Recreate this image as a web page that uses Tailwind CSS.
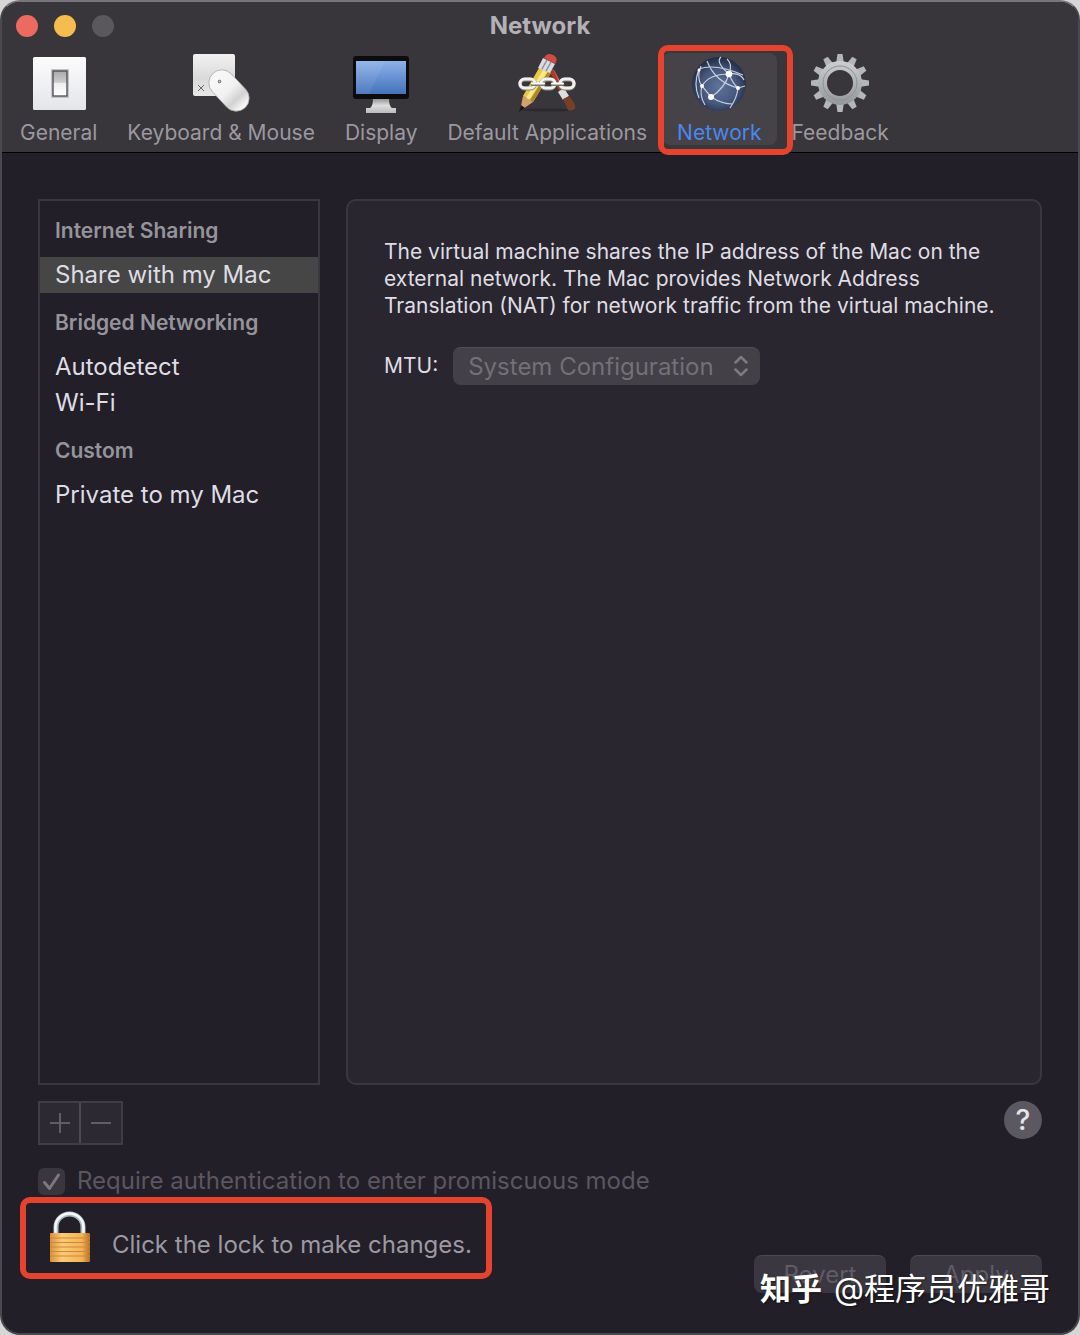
<!DOCTYPE html>
<html lang="en">
<head>
  <meta charset="UTF-8" />
  <meta name="viewport" content="width=device-width, initial-scale=1.0"/>
  <title>Network</title>
  <script src="https://cdn.jsdelivr.net/npm/@tailwindcss/browser@4"></script>
</head>
<body class="bg-[#d6d6d6] font-['Inter','Noto_Sans_CJK_SC',sans-serif] text-[#dfdde3]">

  <div class="relative flex min-h-screen flex-col overflow-hidden rounded-[20px] border-2 border-t-[#77757b] border-[#4a484f] bg-[#221f29]">

    <!-- Title bar and toolbar -->
    <header class="border-b border-black bg-[#38353b]">
      <div class="grid grid-cols-[1fr_auto_1fr] items-center px-3 pt-2">
        <div class="flex gap-4 pl-0.5">
          <button aria-label="Close" class="size-[22px] rounded-full bg-[#ec6a5f]"></button>
          <button aria-label="Minimize" class="size-[22px] rounded-full bg-[#f5bd4f]"></button>
          <button aria-label="Zoom" disabled class="size-[22px] rounded-full bg-[#5a575d]"></button>
        </div>
        <h1 class="text-2xl font-bold text-[#b3b1b6]">Network</h1>
      </div>

      <nav class="flex pt-[11px] pb-[7px] pl-[3px] text-[21px] leading-6 text-[#9b999f]">
        <button class="flex flex-col items-center gap-2 px-[15px]">
          <svg class="h-[60px] w-16" viewBox="0 3 64 60">
            <defs>
              <linearGradient id="plate" x1="0" y1="0" x2="0" y2="1"><stop offset="0" stop-color="#fcfcfd"/><stop offset="1" stop-color="#e4e5e9"/></linearGradient>
              <linearGradient id="rocker" x1="0" y1="0" x2="0" y2="1"><stop offset="0" stop-color="#aaa"/><stop offset=".45" stop-color="#ccc"/><stop offset=".5" stop-color="#eee"/><stop offset="1" stop-color="#fff"/></linearGradient>
            </defs>
            <rect x="6" y="7" width="53" height="53" rx="1.5" fill="url(#plate)"/>
            <rect x="24" y="19" width="18" height="29" fill="#c4c5c9"/>
            <rect x="26" y="21" width="14" height="25" fill="url(#rocker)" stroke="#4c4c50" stroke-width="1.3"/>
          </svg>
          <span>General</span>
        </button>
        <button class="flex flex-col items-center gap-2 px-[15px]">
          <svg class="h-[60px] w-16" viewBox="0 3 64 60">
            <defs>
              <linearGradient id="key" x1="0" y1="0" x2="0" y2="1"><stop offset="0" stop-color="#f2f2f2"/><stop offset=".6" stop-color="#dadada"/><stop offset="1" stop-color="#e8e8e8"/></linearGradient>
              <linearGradient id="mouse" x1="0" y1="0" x2="0" y2="1"><stop offset="0" stop-color="#fafafa"/><stop offset=".5" stop-color="#f1f1f1"/><stop offset=".75" stop-color="#d2d2d2"/><stop offset="1" stop-color="#fff"/></linearGradient>
            </defs>
            <rect x="4" y="4" width="42" height="42" rx="2" fill="url(#key)"/>
            <path d="M9 35l6 6M15 35l-6 6" stroke="#666" stroke-width="1"/>
            <rect x="27" y="17" width="26" height="47" rx="13" transform="rotate(-43 40 40.500)" fill="url(#mouse)" stroke="#aaa" stroke-width=".8"/>
            <circle cx="30.500" cy="31.500" r="1.300" fill="#ccc" stroke="#555" stroke-width=".9"/>
          </svg>
          <span>Keyboard &amp; Mouse</span>
        </button>
        <button class="flex flex-col items-center gap-2 px-[15px]">
          <svg class="h-[60px] w-16" viewBox="0 3 64 60">
            <defs>
              <linearGradient id="screen" x1="0" y1="0" x2="0" y2="1"><stop offset="0" stop-color="#8db2ea"/><stop offset="1" stop-color="#4472bb"/></linearGradient>
              <linearGradient id="stand" x1="0" y1="0" x2="0" y2="1"><stop offset="0" stop-color="#8a8a8a"/><stop offset=".5" stop-color="#ddd"/><stop offset="1" stop-color="#bbb"/></linearGradient>
            </defs>
            <path d="M24 48h16q0 8 3 10h4v5H17v-5h4q3-2 3-10z" fill="url(#stand)"/>
            <rect x="4" y="6" width="56" height="43" rx="3" fill="#0c0c0e"/>
            <rect x="7" y="11" width="50" height="33" fill="url(#screen)"/>
            <path d="M7 11h29L20 44H7z" fill="#fff" opacity=".07"/>
          </svg>
          <span>Display</span>
        </button>
        <button class="flex flex-col items-center gap-2 px-[15px]">
          <svg class="h-[60px] w-16" viewBox="0 3 64 60">
            <ellipse cx="33" cy="60" rx="26" ry="1.500" fill="#2b292e"/>
            <path d="M34 20l4-1 13 23-5 3z" fill="#a83a28"/>
            <path d="M38 19l1 1 12 22-2 1z" fill="#d4705a"/>
            <path d="M43 42l6-4 5 8-6 4z" fill="#ddd"/>
            <path d="M48 49l6-3q8 9 6 13-4 3-7 1z" fill="#754028"/>
            <path d="M24 18l12 5-18 29-10-6z" fill="#e9c946"/>
            <path d="M28 20l4 2-18 28-3-2z" fill="#f8e88a"/>
            <path d="M33 22l3 1-18 29-3-2z" fill="#a9882b"/>
            <path d="M8 46l10 6L5 61z" fill="#d3a16b"/>
            <path d="M6 55l4 3-6 4z" fill="#171719"/>
            <path d="M28 8l12 6-5 9-12-5z" fill="#d9dce2"/>
            <path d="M32 10l-5 9M36 12l-5 9" stroke="#8d9096" stroke-width="1.500"/>
            <path d="M29 8q3-6 9-3t2 9z" fill="#cf4b48"/>
            <g fill="none" stroke="#8a8a82" stroke-width="4"><rect x="5" y="29.500" width="15" height="9" rx="4.500"/><rect x="26" y="29.500" width="14" height="9" rx="4.500"/><rect x="45" y="29.500" width="14" height="9" rx="4.500"/></g>
            <g fill="none" stroke="#f1f1ed" stroke-width="3"><rect x="5" y="29" width="15" height="9" rx="4.500"/><rect x="26" y="29" width="14" height="9" rx="4.500"/><rect x="45" y="29" width="14" height="9" rx="4.500"/></g>
            <path d="M17 34.500h12M37 34.500h11" stroke="#77776f" stroke-width="3" stroke-linecap="round"/>
            <path d="M17 33.500h12M37 33.500h11" stroke="#fff" stroke-width="2" stroke-linecap="round"/>
          </svg>
          <span>Default Applications</span>
        </button>
        <button aria-current="page" class="relative flex flex-col items-center gap-2 rounded-lg bg-[#454248] px-[15px] text-[#4a88ee]">
          <svg class="h-[60px] w-16" viewBox="0 3 64 60">
            <defs>
              <radialGradient id="globe" cx=".5" cy=".55" r=".55"><stop offset="0" stop-color="#5f749c"/><stop offset=".6" stop-color="#46577b"/><stop offset="1" stop-color="#202a42"/></radialGradient>
            </defs>
            <circle cx="32" cy="34" r="27" fill="url(#globe)"/>
            <g fill="none" stroke="#c5cfe0" stroke-width="1.200">
              <path d="M12 19Q28 13 56 25M42 24Q28 12 34 7M42 24Q46 14 40 9M42 24Q22 24 15 36L24 47Q38 38 42 24M20 11Q28 32 51 38L58 36M24 47Q35 54 46 54M15 36Q9 28 14 16M15 36Q12 45 18 55M51 38Q50 48 43 58M12 19Q6 34 12 48M42 24Q46 34 51 38M42 24Q53 22 57 30"/>
            </g>
            <g fill="#fff"><circle cx="42" cy="24" r="3.300"/><circle cx="24" cy="47" r="3"/><circle cx="51" cy="38" r="2"/><circle cx="15" cy="36" r="2"/><circle cx="12" cy="20" r="1.500"/></g>
          </svg>
          <span>Network</span>
          <span class="absolute -top-2 -right-4 -bottom-2.5 -left-1 rounded-[10px] border-[6px] border-[#e5432d]"></span>
        </button>
        <button class="flex flex-col items-center gap-2 px-[15px]">
          <svg class="h-[60px] w-16" viewBox="0 3 64 60">
            <defs>
              <linearGradient id="gear" gradientUnits="userSpaceOnUse" x1="0" y1="4" x2="0" y2="62"><stop offset="0" stop-color="#d3d8d9"/><stop offset="1" stop-color="#8c8e90"/></linearGradient>
            </defs>
            <g fill="#b3b7b9">
              <path id="tooth" d="M28 14l1.500-10h5L36 14z"/>
              <use href="#tooth" transform="rotate(30 32 33)"/><use href="#tooth" transform="rotate(60 32 33)"/>
              <use href="#tooth" transform="rotate(90 32 33)"/><use href="#tooth" transform="rotate(120 32 33)"/>
              <use href="#tooth" transform="rotate(150 32 33)"/><use href="#tooth" transform="rotate(180 32 33)"/>
              <use href="#tooth" transform="rotate(210 32 33)"/><use href="#tooth" transform="rotate(240 32 33)"/>
              <use href="#tooth" transform="rotate(270 32 33)"/><use href="#tooth" transform="rotate(300 32 33)"/>
              <use href="#tooth" transform="rotate(330 32 33)"/>
            </g>
            <circle cx="32" cy="33" r="17.500" fill="none" stroke="url(#gear)" stroke-width="9"/>
            <circle cx="32" cy="33" r="17" fill="none" stroke="#8f9294" stroke-width="1"/>
          </svg>
          <span>Feedback</span>
        </button>
      </nav>
    </header>

    <main class="flex grow flex-col px-9 pt-[46px] pb-10">
      <div class="flex grow gap-[26px]">
        <!-- Network list -->
        <aside class="w-[282px] shrink-0 border-2 border-[#3a373f] pt-4 text-2xl">
          <h2 class="px-[15px] text-[21px] leading-7 font-semibold text-[#96949b]">Internet Sharing</h2>
          <button class="mt-3 block h-9 w-full bg-[#464646] px-[15px] text-left">Share with my Mac</button>
          <h2 class="mt-4 px-[15px] text-[21px] leading-7 font-semibold text-[#96949b]">Bridged Networking</h2>
          <button class="mt-3 block h-9 w-full px-[15px] text-left">Autodetect</button>
          <button class="block h-9 w-full px-[15px] text-left">Wi-Fi</button>
          <h2 class="mt-4 px-[15px] text-[21px] leading-7 font-semibold text-[#96949b]">Custom</h2>
          <button class="mt-3 block h-9 w-full px-[15px] text-left">Private to my Mac</button>
        </aside>

        <section class="grow rounded-[10px] border-2 border-[#3a373f] bg-[#292630] px-9 pt-[37px] text-[21px]">
          <p class="max-w-[620px] leading-[27px]">The virtual machine shares the IP address of the Mac on the external network. The Mac provides Network Address Translation (NAT) for network traffic from the virtual machine.</p>
          <div class="mt-7 flex items-center gap-[15px]">
            <label for="mtu">MTU:</label>
            <div class="relative">
              <select id="mtu" disabled class="h-[38px] w-[307px] appearance-none rounded-lg border-t border-[#504d55] bg-[#434047] px-[15px] text-2xl leading-8 text-[#737078] opacity-100">
                <option>System Configuration</option>
              </select>
              <svg class="absolute top-2 right-3 h-[22px] w-3.5" viewBox="0 0 14 22" fill="none" stroke="#7d7a82" stroke-width="2.500" stroke-linecap="round" stroke-linejoin="round"><path d="M1.500 7.500L7 2l5.500 5.500M1.500 14.500L7 20l5.500-5.500"/></svg>
            </div>
          </div>
        </section>
      </div>

      <div class="mt-4 flex items-start justify-between">
        <div class="flex border-2 border-[#403d45] bg-[#2c2933]">
          <button disabled aria-label="Add" class="grid h-10 w-[41px] place-items-center border-r-2 border-[#4d4a52]">
            <svg class="size-5" viewBox="0 0 20 20" stroke="#605d66" stroke-width="2"><path d="M0 10h20M10 0v20"/></svg>
          </button>
          <button disabled aria-label="Remove" class="grid h-10 w-10 place-items-center">
            <svg class="size-5" viewBox="0 0 20 20" stroke="#605d66" stroke-width="2"><path d="M0 10h20"/></svg>
          </button>
        </div>
        <button aria-label="Help" class="size-[38px] rounded-full bg-[#5b5861] text-[28px] leading-[38px] font-medium text-[#e6e4e9]">?</button>
      </div>

      <div class="mt-5 flex h-8 items-center gap-3 text-2xl text-[#5a5760]">
        <span class="relative size-[27px]">
          <input id="auth" type="checkbox" checked disabled class="block size-[27px] appearance-none rounded-md bg-[#39363e]"/>
          <svg class="absolute inset-0" viewBox="0 0 27 27" fill="none" stroke="#7b7880" stroke-width="3" stroke-linecap="round" stroke-linejoin="round"><path d="M6.500 14.500l5 6L20.500 7"/></svg>
        </span>
        <label for="auth">Require authentication to enter promiscuous mode</label>
      </div>

      <div class="flex items-end justify-between">
        <button class="mb-3.5 -ml-[18px] flex h-[82px] w-[472px] items-end gap-[18px] rounded-[10px] border-[6px] border-[#e5432d] pb-2.5 pl-5 text-2xl text-[#9c99a1]">
          <svg class="h-[54px] w-12" viewBox="0 0 48 54">
            <defs>
              <linearGradient id="brass" x1="0" y1="0" x2="1" y2="0"><stop offset="0" stop-color="#d9903c"/><stop offset=".3" stop-color="#fccb74"/><stop offset=".8" stop-color="#f4b356"/><stop offset="1" stop-color="#b96d25"/></linearGradient>
            </defs>
            <path d="M10 27V18a13.500 13 0 0 1 27 0v9" fill="none" stroke="#aebbc4" stroke-width="5"/>
            <path d="M9.500 27V18a14 13.500 0 0 1 28 0v9" fill="none" stroke="#f5f9fb" stroke-width="2.500"/>
            <rect x="4" y="24" width="40" height="29" rx="1" fill="url(#brass)"/>
            <path d="M4 29h40M4 33.500h40M4 38h40M4 42.500h40M4 47h40" stroke="#c98a3c" stroke-width="1"/>
          </svg>
          <span class="leading-9">Click the lock to make changes.</span>
        </button>
        <div class="flex gap-6 text-2xl text-[#5f5c65]">
          <button disabled class="h-[38px] w-[132px] rounded-lg border-t border-[#4c4951] bg-[#3a3740]">Revert</button>
          <button disabled class="h-[38px] w-[132px] rounded-lg border-t border-[#4c4951] bg-[#3a3740]">Apply</button>
        </div>
      </div>
    </main>

    <p class="absolute right-7 bottom-6 flex gap-3 text-[31px] leading-10 text-white [text-shadow:1px_1px_2px_rgb(0_0_0/0.5)]"><span class="font-bold">知乎</span><span>@程序员优雅哥</span></p>
  </div>

</body>
</html>
